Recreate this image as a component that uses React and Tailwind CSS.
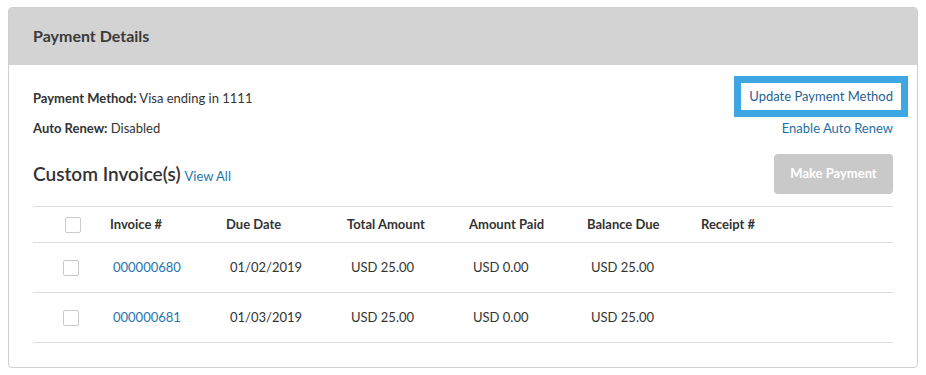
import React from 'react';

const invoices = [
  { id: '000000680', due: '01/02/2019', total: 'USD 25.00', paid: 'USD 0.00', balance: 'USD 25.00' },
  { id: '000000681', due: '01/03/2019', total: 'USD 25.00', paid: 'USD 0.00', balance: 'USD 25.00' },
];

function Checkbox({ className = '' }) {
  return <span className={`block w-4 h-4 border border-[#c9c9c9] rounded-[2px] bg-white ${className}`} />;
}

export default function App() {
  return (
    <div className="min-h-screen bg-white pt-[7px] pl-[8px] pr-[8px] font-['Lato','Open_Sans',sans-serif] text-[#333]">
      <div className="border border-[#cfcfcf] rounded-[4px] overflow-hidden h-[361px]">
        {/* Header */}
        <div className="bg-[#d3d3d3] h-[57px] flex items-center pl-[24px] pb-[2px]">
          <h2 className="text-[16px] font-bold text-[#3a3a3a]">Payment Details</h2>
        </div>

        <div className="px-[24px]">
          {/* Payment info */}
          <div className="flex justify-between pt-[11px]">
            <div className="text-[13px] pt-[12px]">
              <p className="leading-[20px]">
                <span className="font-bold">Payment Method:</span> Visa ending in 1111
              </p>
              <p className="leading-[20px] mt-[10px]">
                <span className="font-bold">Auto Renew:</span> Disabled
              </p>
            </div>
            <div className="flex flex-col items-end -mr-[15px]">
              <a
                href="#"
                className="border-[7px] border-[#3ea6e3] h-[41px] px-[8px] flex items-center text-[13px] text-[#1f5f92]"
              >
                Update Payment Method
              </a>
              <a href="#" className="text-[13px] text-[#1f6fa8] leading-[20px] mt-[1px] mr-[15px]">
                Enable Auto Renew
              </a>
            </div>
          </div>

          {/* Invoices heading */}
          <div className="flex justify-between items-center mt-[16px]">
            <div className="flex items-baseline gap-[4px]">
              <h3 className="text-[19px] font-semibold text-[#333]">Custom Invoice(s)</h3>
              <a href="#" className="text-[13px] text-[#1f75b0]">View All</a>
            </div>
            <button
              disabled
              className="w-[119px] h-[40px] rounded-[4px] bg-[#c9c9c9] text-white text-[13px] font-bold"
            >
              Make Payment
            </button>
          </div>

          {/* Table */}
          <table className="w-full mt-[12px] border-collapse text-[13px] table-fixed">
            <colgroup>
              <col className="w-[77px]" />
              <col className="w-[116px]" />
              <col className="w-[121px]" />
              <col className="w-[122px]" />
              <col className="w-[118px]" />
              <col className="w-[114px]" />
              <col />
            </colgroup>
            <thead>
              <tr className="border-y border-[#dcdcdc] h-[36px]">
                <th className="text-left font-normal">
                  <Checkbox className="ml-[32px]" />
                </th>
                <th className="text-left font-bold">Invoice #</th>
                <th className="text-left font-bold">Due Date</th>
                <th className="text-left font-bold">Total Amount</th>
                <th className="text-left font-bold">Amount Paid</th>
                <th className="text-left font-bold">Balance Due</th>
                <th className="text-left font-bold">Receipt #</th>
              </tr>
            </thead>
            <tbody>
              {invoices.map((inv) => (
                <tr key={inv.id} className="border-b border-[#dcdcdc] h-[50px]">
                  <td>
                    <Checkbox className="ml-[30px]" />
                  </td>
                  <td className="pl-[3px]">
                    <a href="#" className="text-[#1f75b0]">{inv.id}</a>
                  </td>
                  <td className="pl-[4px]">{inv.due}</td>
                  <td className="pl-[4px]">{inv.total}</td>
                  <td className="pl-[4px]">{inv.paid}</td>
                  <td className="pl-[4px]">{inv.balance}</td>
                  <td></td>
                </tr>
              ))}
            </tbody>
          </table>
        </div>
      </div>
    </div>
  );
}
